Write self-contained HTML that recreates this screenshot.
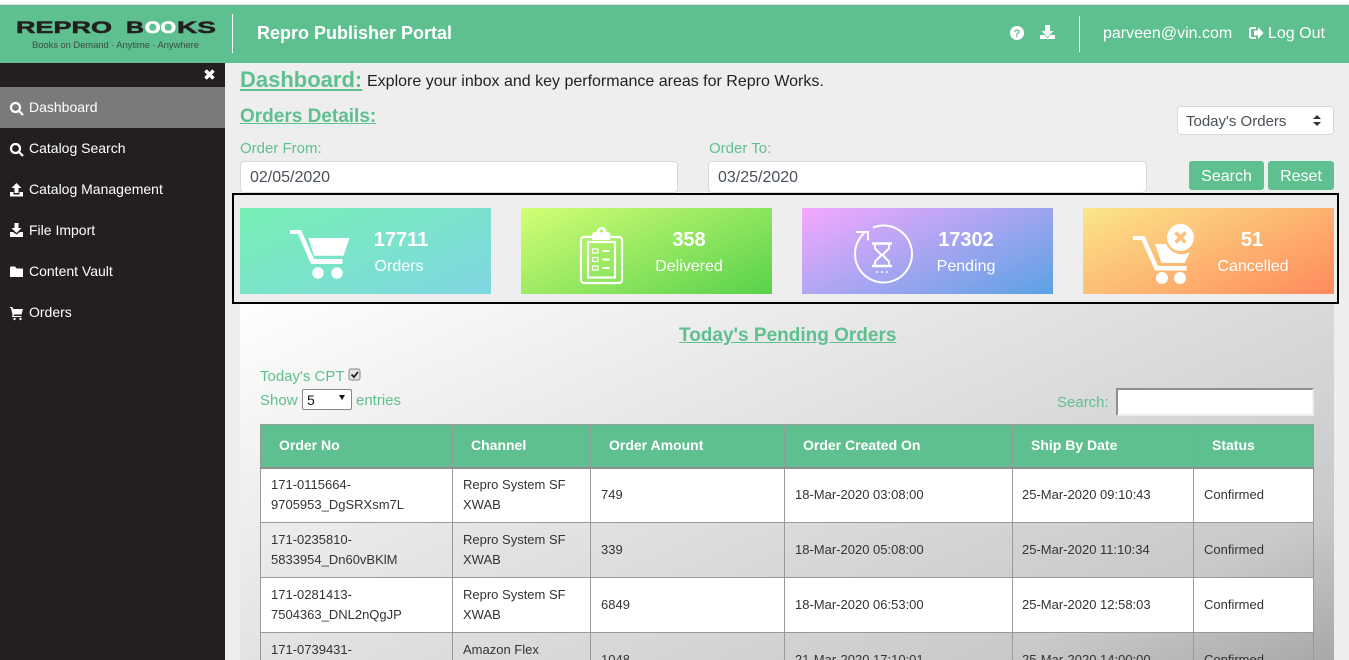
<!DOCTYPE html>
<html><head><meta charset="utf-8"><style>
*{box-sizing:border-box}
html,body{margin:0;padding:0;width:1349px;height:660px;overflow:hidden}
#p{width:1349px;height:660px;overflow:hidden;position:relative;background:#eee;font-family:"Liberation Sans",sans-serif;color:#333}
.a{position:absolute;white-space:nowrap}
.g{color:#5fc08f}
.nav{left:29px;color:#fff;font-size:14px;line-height:18px}
.box{background:#fff;border:1px solid #d5d8dc;border-radius:4px}
.btn{background:#5fc08f;color:#fff;border-radius:3px;font-size:16px;text-align:center;line-height:31px;height:29px;top:161px}
.card{top:208px;height:86px;width:251px}
.n{color:#fff;font-weight:bold;font-size:20px;line-height:24px;top:228px;text-align:center;width:120px}
.l{color:#fff;font-size:16px;line-height:20px;top:257px;text-align:center;width:120px}
table{position:absolute;left:260px;top:424px;width:1053px;border-collapse:collapse;table-layout:fixed;font-size:13px;color:#333}
th{background:#5fc08f;color:#fff;font-size:14px;font-weight:bold;text-align:left;padding:0 0 1px 18px;height:43px;border:1px solid #999;border-bottom:2px solid #8f8f8f}
td{height:55px;padding:0 10px 1px;line-height:19.5px;border:1px solid #999;vertical-align:middle}
td:nth-child(5){padding-left:9px}
tr.w td{background:#fff}
</style></head><body><div id="p">
<div class="a" style="left:0;top:0;width:1349px;height:4px;background:#fff"></div>
<div class="a" style="left:0;top:4px;width:1349px;height:1px;background:#e2e2e2"></div>
<div class="a" style="left:0;top:5px;width:1349px;height:58px;background:#5fc08f"></div>
<div class="a" style="left:232px;top:14px;width:1px;height:39px;background:#fff"></div>
<div class="a" style="left:1079px;top:16px;width:1px;height:36px;background:#fff"></div>
<div class="a" style="left:257px;top:22px;color:#fff;font-weight:bold;font-size:18px;line-height:22px">Repro Publisher Portal</div>
<div class="a" style="left:1103px;top:24px;color:#fff;font-size:16px;line-height:19px">parveen@vin.com</div>
<div class="a" style="left:1268px;top:24px;color:#fff;font-size:16px;line-height:19px">Log Out</div>

<div class="a" style="left:0;top:63px;width:225px;height:597px;background:#231f20"></div>
<div class="a" style="left:0;top:87px;width:225px;height:41px;background:#7b7979"></div>
<div class="a nav" style="top:98px">Dashboard</div>
<div class="a nav" style="top:139px">Catalog Search</div>
<div class="a nav" style="top:180px">Catalog Management</div>
<div class="a nav" style="top:221px">File Import</div>
<div class="a nav" style="top:262px">Content Vault</div>
<div class="a nav" style="top:303px">Orders</div>

<div class="a" style="left:240px;top:66px;font-size:22px;font-weight:bold;line-height:27px;color:#5fc08f;text-decoration:underline">Dashboard:</div>
<div class="a" style="left:367px;top:72px;font-size:16px;line-height:20px;color:#222">Explore your inbox and key performance areas for Repro Works.</div>
<div class="a" style="left:240px;top:106px;font-size:19px;font-weight:bold;line-height:22px;color:#5fc08f;text-decoration:underline">Orders Details:</div>
<div class="a g" style="left:240px;top:140px;font-size:15px;line-height:18px">Order From:</div>
<div class="a g" style="left:709px;top:140px;font-size:15px;line-height:18px">Order To:</div>
<div class="a box" style="left:240px;top:161px;width:438px;height:32px;font-size:16px;line-height:32px;padding-left:9px;color:#495057">02/05/2020</div>
<div class="a box" style="left:708px;top:161px;width:439px;height:32px;font-size:16px;line-height:32px;padding-left:9px;color:#495057">03/25/2020</div>
<div class="a box" style="left:1177px;top:106px;width:157px;height:29px;font-size:15px;line-height:29px;padding-left:8px;color:#495057">Today's Orders</div>
<div class="a btn" style="left:1189px;width:75px">Search</div>
<div class="a btn" style="left:1268px;width:66px">Reset</div>

<div class="a" style="left:240px;top:294px;width:1094px;height:366px;background:linear-gradient(156deg,#fff 0%,#c9c9c9 83%,#a8a8a8 100%)"></div>
<div class="a" style="left:232px;top:193px;width:1107px;height:111px;border:2px solid #000;background:#eee"></div>
<div class="a card" style="left:240px;background:linear-gradient(155deg,#76f0b4,#80d6e2)"></div>
<div class="a card" style="left:521px;background:linear-gradient(155deg,#d3ff75,#58d14c)"></div>
<div class="a card" style="left:802px;background:linear-gradient(155deg,#f5a8ff,#5ba2e4)"></div>
<div class="a card" style="left:1083px;background:linear-gradient(155deg,#fbe68a,#ff8a5c)"></div>
<div class="a n" style="left:341px">17711</div><div class="a l" style="left:339px">Orders</div>
<div class="a n" style="left:629px">358</div><div class="a l" style="left:629px">Delivered</div>
<div class="a n" style="left:906px">17302</div><div class="a l" style="left:906px">Pending</div>
<div class="a n" style="left:1192px">51</div><div class="a l" style="left:1193px">Cancelled</div>

<div class="a g" style="left:679px;top:325px;font-size:19px;font-weight:bold;line-height:22px;text-decoration:underline">Today's Pending Orders</div>
<div class="a g" style="left:260px;top:368px;font-size:15px;line-height:18px">Today's CPT</div>
<div class="a g" style="left:260px;top:392px;font-size:15px;line-height:18px">Show</div>
<div class="a" style="left:302px;top:389px;width:50px;height:21px;background:#fff;border:1px solid #888;border-radius:2px;font-size:14px;line-height:20px;padding-left:4px;color:#111">5</div>
<div class="a g" style="left:356px;top:392px;font-size:15px;line-height:18px">entries</div>
<div class="a g" style="left:1057px;top:394px;font-size:15px;line-height:18px">Search:</div>
<div class="a" style="left:1116px;top:388px;width:198px;height:28px;background:#fff;border:2px solid;border-color:#8f8f8f #eee #eee #8f8f8f"></div>

<table>
<colgroup><col style="width:192px"><col style="width:138px"><col style="width:194px"><col style="width:228px"><col style="width:181px"><col style="width:120px"></colgroup>
<tr><th>Order No</th><th>Channel</th><th>Order Amount</th><th>Order Created On</th><th>Ship By Date</th><th>Status</th></tr>
<tr class="w"><td>171-0115664-<br>9705953_DgSRXsm7L</td><td>Repro System SF<br>XWAB</td><td>749</td><td>18-Mar-2020 03:08:00</td><td>25-Mar-2020 09:10:43</td><td>Confirmed</td></tr>
<tr><td>171-0235810-<br>5833954_Dn60vBKlM</td><td>Repro System SF<br>XWAB</td><td>339</td><td>18-Mar-2020 05:08:00</td><td>25-Mar-2020 11:10:34</td><td>Confirmed</td></tr>
<tr class="w"><td>171-0281413-<br>7504363_DNL2nQgJP</td><td>Repro System SF<br>XWAB</td><td>6849</td><td>18-Mar-2020 06:53:00</td><td>25-Mar-2020 12:58:03</td><td>Confirmed</td></tr>
<tr><td>171-0739431-<br>&nbsp;</td><td>Amazon Flex<br>&nbsp;</td><td>1048</td><td>21-Mar-2020 17:10:01</td><td>25-Mar-2020 14:00:00</td><td>Confirmed</td></tr>
</table>

<svg class="a" style="left:0;top:0" width="1349" height="660" viewBox="0 0 1349 660">
<!-- logo -->
<g font-family="'Liberation Sans',sans-serif" font-weight="bold" font-size="17">
<text x="16" y="33" fill="#231f20" stroke="#231f20" stroke-width=".5" textLength="96" lengthAdjust="spacingAndGlyphs">REPRO</text>
<text x="126" y="33" fill="#231f20" stroke="#231f20" stroke-width=".5" textLength="18" lengthAdjust="spacingAndGlyphs">B</text>
<text x="145" y="33" fill="#fff" stroke="#fff" stroke-width=".7" textLength="31" lengthAdjust="spacingAndGlyphs">OO</text>
<text x="177" y="33" fill="#231f20" stroke="#231f20" stroke-width=".5" textLength="39" lengthAdjust="spacingAndGlyphs">KS</text>
</g>
<text x="32" y="48" font-family="'Liberation Sans',sans-serif" font-size="9.500" fill="#3a4f45" textLength="167">Books on Demand · Anytime · Anywhere</text>

<!-- header icons -->
<circle cx="1017" cy="33" r="7" fill="#fff"/>
<text x="1017" y="37" text-anchor="middle" font-family="'Liberation Sans',sans-serif" font-weight="bold" font-size="11" fill="#5fc08f">?</text>
<path d="M1045 25h5v6h3.500l-6 6-6-6h3.500z" fill="#fff"/>
<path d="M1040 35h4.500l3 3 3-3h4.500v4h-15z" fill="#fff"/>
<path d="M1256 28h-4.500a1.500 1.500 0 0 0-1.500 1.500v7a1.500 1.500 0 0 0 1.500 1.500h4.500" fill="none" stroke="#fff" stroke-width="2"/>
<path d="M1254 30.500h4v-3.500l5.500 6-5.500 6v-3.500h-4z" fill="#fff"/>

<!-- sidebar icons -->
<path d="M205.500 70.500l8 8M213.500 70.500l-8 8" stroke="#fff" stroke-width="3.500" fill="none"/>
<g fill="none" stroke="#fff" stroke-width="2.200">
<circle cx="15.500" cy="107.500" r="4.500"/><path d="M19 111l4 4"/>
<circle cx="15.500" cy="148.500" r="4.500"/><path d="M19 152l4 4"/>
</g>
<g fill="#fff">
<path d="M16.500 183l5 5h-3v5h-4v-5h-3z"/><path d="M10 192h3.500v2.500h6V192H23v4.500H10z"/>
<path d="M14.500 223h4v5h3l-5 5-5-5h3z"/><path d="M10 232h3l3.500 2.500L20 232h3v5H10z"/>
<path d="M10 267.500a1 1 0 0 1 1-1h4l1.500 2h6a1 1 0 0 1 .5 1v7.500H10z"/>
<path d="M10 307h2.500l.5 2h10l-1.500 5.500h-7.500l-.5 1.500h8v1h-9.500l.5-2.500-1.500-6.500H10z"/><circle cx="14.500" cy="319" r="1.200"/><circle cx="20.500" cy="319" r="1.200"/>
</g>

<!-- select arrows -->
<path d="M1313 119l4-4 4 4zM1313 122l4 4 4-4z" fill="#333"/>
<path d="M339 395h6l-3 5z" fill="#111"/>
<!-- checkbox -->
<rect x="349" y="369" width="11" height="11" rx="2" fill="#e4e4e4" stroke="#888"/>
<path d="M351.500 374.500l2.500 2.500 4-5" fill="none" stroke="#222" stroke-width="1.800"/>

<!-- orders cart -->
<g fill="#fff">
<path d="M290 230h11l13 29h28.500v5h-31.500l-13-30h-8z"/>
<path d="M308.500 238h41l-6 17.700H314z"/>
<circle cx="318" cy="273" r="5.700"/><circle cx="337" cy="273" r="5.700"/>
</g>
<!-- clipboard -->
<g fill="none" stroke="#fff" stroke-width="2.200">
<path d="M592 237h-8a3 3 0 0 0-3 3v40a3 3 0 0 0 3 3h35a3 3 0 0 0 3-3v-40a3 3 0 0 0-3-3h-8"/>
<rect x="588" y="242" width="27" height="35.500"/>
<rect x="592.500" y="249" width="5.500" height="4" stroke-width="1.200"/><rect x="592.500" y="257.500" width="5.500" height="4" stroke-width="1.200"/><rect x="592.500" y="266" width="5.500" height="4" stroke-width="1.200"/>
</g>
<path d="M592 240v-5a3 3 0 0 1 3-3h1.500a5 5 0 0 1 10 0h1a3 3 0 0 1 3 3v5z" fill="#fff"/>
<circle cx="601.500" cy="231" r="1.500" fill="#b0ea66"/>
<path d="M602.500 251h7M602.500 259.500h7M602.500 268h7" stroke="#fff" stroke-width="2"/>
<!-- pending -->
<path d="M873 227.500A28.500 28.500 0 1 1 866 231.500" fill="none" stroke="#fff" stroke-width="2"/>
<path d="M856 232h12v8.500" fill="none" stroke="#fff" stroke-width="2"/>
<path d="M872 243.500h20M872 266h20" stroke="#fff" stroke-width="2.500"/>
<path d="M875 244v4.500l6.500 6.500-6.500 6.500v4.500M889 244v4.500l-6.500 6.500 6.500 6.500v4.500" fill="none" stroke="#fff" stroke-width="2"/>
<path d="M876 272h2M881 272h2M886 272h2" stroke="#fff" stroke-width="1.500"/>
<!-- cancelled cart -->
<g fill="#fff">
<path d="M1133 236h11.500l13.500 30h28.500v4.500h-31.500l-13.500-30.500h-8.500z"/>
<path d="M1155 244h11a17 17 0 0 0 24 8l-5.500 11h-23z"/>
<circle cx="1162" cy="278" r="6"/><circle cx="1180" cy="278" r="6"/>
<circle cx="1180.500" cy="237.500" r="13.500"/>
</g>
<path d="M1175.500 232.500l10 10M1185.500 232.500l-10 10" stroke="#fcc078" stroke-width="3.500"/>
</svg>
</div></body></html>
